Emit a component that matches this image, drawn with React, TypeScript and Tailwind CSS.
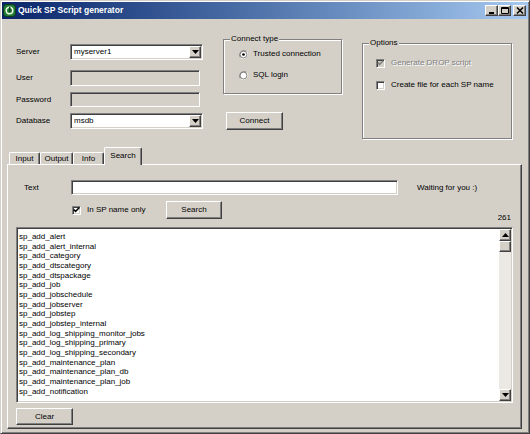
import React from "react"

const raised =
  "border border-t-white border-l-white border-r-[#404040] border-b-[#404040] shadow-[inset_-1px_-1px_0_#808080]"
const sunken =
  "border border-t-[#808080] border-l-[#808080] border-r-white border-b-white shadow-[inset_1px_1px_0_#404040,inset_-1px_-1px_0_#d4d0c8]"

const procs = [
  "sp_add_alert",
  "sp_add_alert_internal",
  "sp_add_category",
  "sp_add_dtscategory",
  "sp_add_dtspackage",
  "sp_add_job",
  "sp_add_jobschedule",
  "sp_add_jobserver",
  "sp_add_jobstep",
  "sp_add_jobstep_internal",
  "sp_add_log_shipping_monitor_jobs",
  "sp_add_log_shipping_primary",
  "sp_add_log_shipping_secondary",
  "sp_add_maintenance_plan",
  "sp_add_maintenance_plan_db",
  "sp_add_maintenance_plan_job",
  "sp_add_notification",
]

function Arrow({ down }: { down?: boolean }) {
  return (
    <svg width="7" height="4" viewBox="0 0 7 4">
      <path d={down ? "M0 0h7L3.5 4z" : "M0 4h7L3.5 0z"} fill="#000" />
    </svg>
  )
}

function Combo({ value }: { value: string }) {
  return (
    <div className={`flex h-[16px] w-[133px] items-center bg-white p-[1px] ${sunken}`}>
      <span className="flex-1 pl-[2px]">{value}</span>
      <span className={`flex h-[12px] w-[12px] items-center justify-center bg-[#d4d0c8] ${raised}`}>
        <Arrow down />
      </span>
    </div>
  )
}

function Radio({ checked, label }: { checked?: boolean; label: string }) {
  return (
    <div className="flex h-[10px] items-center">
      <svg width="9" height="9" viewBox="0 0 12 12">
        <path d="M10.2 1.8A6 6 0 0 0 1.8 10.2" stroke="#808080" strokeWidth="1" fill="none" />
        <path d="M1.8 10.2A6 6 0 0 0 10.2 1.8" stroke="#fff" strokeWidth="1" fill="none" />
        <circle cx="6" cy="6" r="4.5" fill="#fff" stroke="#404040" strokeWidth="0.8" />
        {checked && <circle cx="6" cy="6" r="1.8" fill="#000" />}
      </svg>
      <span className="ml-[5px]">{label}</span>
    </div>
  )
}

function Check({ checked, disabled, label }: { checked?: boolean; disabled?: boolean; label: string }) {
  return (
    <div className="flex h-[10px] items-center">
      <span className={`flex h-[9px] w-[9px] items-center justify-center ${disabled ? "bg-[#d4d0c8]" : "bg-white"} ${sunken}`}>
        {checked && (
          <svg width="7" height="6" viewBox="0 0 7 6">
            <path d="M0.8 2.6L2.6 4.4L6.2 0.8" stroke={disabled ? "#808080" : "#000"} strokeWidth="1.5" fill="none" />
          </svg>
        )}
      </span>
      <span className={`ml-[6px] ${disabled ? "text-[#808080] [text-shadow:1px_1px_0_#fff]" : ""}`}>{label}</span>
    </div>
  )
}

function Button({ label, w }: { label: string; w: string }) {
  return (
    <button className={`flex h-[17px] items-center justify-center bg-[#d4d0c8] ${raised} ${w}`}>
      {label}
    </button>
  )
}

function TitleButton({ kind }: { kind: "min" | "max" | "close" }) {
  return (
    <span className={`flex h-[11px] w-[13px] items-center justify-center bg-[#d4d0c8] ${raised}`}>
      <svg width="8" height="7" viewBox="0 0 8 7">
        {kind === "min" && <rect x="1" y="5" width="5" height="2" fill="#000" />}
        {kind === "max" && (
          <path d="M0.5 0.5h7v6h-7z M0.5 1.5h7" stroke="#000" strokeWidth="1" fill="none" />
        )}
        {kind === "close" && <path d="M1 0.5L7 6.5M7 0.5L1 6.5" stroke="#000" strokeWidth="1.5" />}
      </svg>
    </span>
  )
}

export default function App() {
  return (
    <div className="h-[434px] w-[530px] overflow-hidden border border-t-[#d4d0c8] border-l-[#d4d0c8] border-r-[#404040] border-b-[#404040] bg-[#d4d0c8] p-[1px] text-[8px] leading-none text-black shadow-[inset_1px_1px_0_#fff,inset_-1px_-1px_0_#808080] [font-family:'Liberation_Sans',Arial,sans-serif]">
      {/* Title bar */}
      <div className="flex h-[17px] items-center bg-linear-to-r from-[#0a246a] to-[#a6caf0] pl-[1px] pr-[2px]">
        <svg width="13" height="13" viewBox="0 0 13 13">
          <rect x="0.5" y="0.5" width="12" height="12" rx="3" fill="#1f7a36" stroke="#0d3d1a" />
          <circle cx="6.5" cy="6.5" r="3.3" fill="none" stroke="#e8f5e0" strokeWidth="1.6" />
          <rect x="6" y="3" width="1.4" height="5" fill="#0d3d1a" />
        </svg>
        <span className="ml-[2px] text-[8.5px] font-bold text-white">Quick SP Script generator</span>
        <div className="ml-auto flex items-center">
          <TitleButton kind="min" />
          <TitleButton kind="max" />
          <span className="ml-[2px]">
            <TitleButton kind="close" />
          </span>
        </div>
      </div>

      {/* Connection settings */}
      <div className="flex h-[127px] items-start pl-[14px]">
        <div className="mt-[25px] flex w-[187px] flex-col">
          <div className="flex h-[16px] items-center">
            <span className="w-[54px]">Server</span>
            <Combo value="myserver1" />
          </div>
          <div className="mt-[10px] flex h-[16px] items-center">
            <span className="w-[54px]">User</span>
            <div className={`h-[16px] w-[130px] bg-[#d4d0c8] ${sunken}`} />
          </div>
          <div className="mt-[6px] flex h-[15px] items-center">
            <span className="w-[54px]">Password</span>
            <div className={`h-[15px] w-[130px] bg-[#d4d0c8] ${sunken}`} />
          </div>
          <div className="mt-[6px] flex h-[16px] items-center">
            <span className="w-[54px]">Database</span>
            <Combo value="msdb" />
          </div>
        </div>

        <div className="ml-[20px] mt-[15px] flex flex-col">
          <fieldset className="h-[60px] w-[119px] border border-[#808080] shadow-[1px_1px_0_#fff,inset_1px_1px_0_#fff]">
            <legend className="ml-[6px] bg-[#d4d0c8] px-[1px] leading-[10px]">Connect type</legend>
            <div className="flex flex-col gap-[11px] pl-[15px] pt-[5px]">
              <Radio checked label="Trusted connection" />
              <Radio label="SQL login" />
            </div>
          </fieldset>
          <div className="ml-[3px] mt-[18px]">
            <Button label="Connect" w="w-[57px] h-[18px]" />
          </div>
        </div>

        <fieldset className="ml-[20px] mt-[19px] h-[101px] w-[150px] border border-[#808080] shadow-[1px_1px_0_#fff,inset_1px_1px_0_#fff]">
          <legend className="ml-[6px] bg-[#d4d0c8] px-[1px] leading-[10px]">Options</legend>
          <div className="flex flex-col gap-[12px] pl-[13px] pt-[10px]">
            <Check checked disabled label="Generate DROP script" />
            <Check label="Create file for each SP name" />
          </div>
        </fieldset>
      </div>

      {/* Tabs */}
      <div className="ml-[5px] w-[515px]">
        <div className="relative z-10 -mb-[1px] flex h-[19px] items-end pl-[2px]">
          {[
            { label: "Input", w: "w-[31px]" },
            { label: "Output", w: "w-[33px]" },
            { label: "Info", w: "w-[31px]" },
          ].map((t) => (
            <div
              key={t.label}
              className={`mb-[1px] flex h-[12px] items-center justify-center rounded-t-[2px] border border-b-0 border-t-white border-l-white border-r-[#404040] shadow-[inset_-1px_0_0_#808080] ${t.w}`}
            >
              {t.label}
            </div>
          ))}
          <div className="flex h-[18px] w-[38px] items-start justify-center rounded-t-[2px] border border-b-0 border-t-white border-l-white border-r-[#404040] bg-[#d4d0c8] pt-[4px] shadow-[inset_-1px_0_0_#808080]">
            Search
          </div>
        </div>

        <div className={`flex h-[265px] flex-col pl-[8px] pr-[8px] ${raised}`}>
          <div className="mt-[15px] flex h-[15px] items-center">
            <span className="w-[55px] pl-[8px]">Text</span>
            <div className={`h-[15px] w-[327px] bg-white ${sunken}`} />
            <span className="ml-[19px]">Waiting for you :)</span>
          </div>

          <div className="mt-[6px] flex h-[22px] items-start">
            <div className="ml-[56px] mt-[4px] w-[94px]">
              <Check checked label="In SP name only" />
            </div>
            <Button label="Search" w="w-[56px] h-[18px]" />
            <span className="mb-[1px] mr-[2px] ml-auto self-end">261</span>
          </div>

          <div className={`mt-[4px] flex h-[176px] bg-white p-[1px] ${sunken}`}>
            <div className="flex-1 overflow-hidden pl-[1px] pt-[3px] leading-[9.67px]">
              {procs.map((p) => (
                <div key={p}>{p}</div>
              ))}
            </div>
            <div className="flex w-[12px] flex-col bg-[#ebe9e4]">
              <span className={`flex h-[12px] items-center justify-center bg-[#d4d0c8] ${raised}`}>
                <Arrow />
              </span>
              <span className={`h-[11px] bg-[#d4d0c8] ${raised}`} />
              <span className="flex-1" />
              <span className={`flex h-[12px] items-center justify-center bg-[#d4d0c8] ${raised}`}>
                <Arrow down />
              </span>
            </div>
          </div>

          <div className="mt-[5px]">
            <Button label="Clear" w="w-[57px] h-[16px]" />
          </div>
        </div>
      </div>
    </div>
  )
}
